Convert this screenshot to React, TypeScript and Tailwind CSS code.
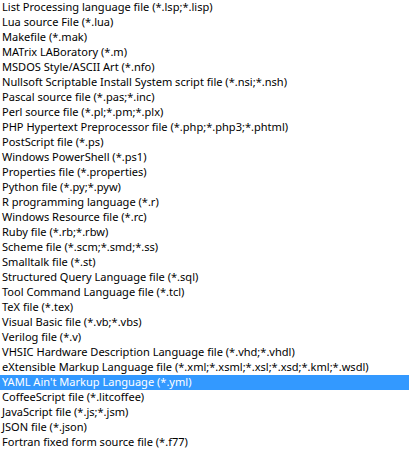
const items = [
  "List Processing language file (*.lsp;*.lisp)",
  "Lua source File (*.lua)",
  "Makefile (*.mak)",
  "MATrix LABoratory (*.m)",
  "MSDOS Style/ASCII Art (*.nfo)",
  "Nullsoft Scriptable Install System script file (*.nsi;*.nsh)",
  "Pascal source file (*.pas;*.inc)",
  "Perl source file (*.pl;*.pm;*.plx)",
  "PHP Hypertext Preprocessor file (*.php;*.php3;*.phtml)",
  "PostScript file (*.ps)",
  "Windows PowerShell (*.ps1)",
  "Properties file (*.properties)",
  "Python file (*.py;*.pyw)",
  "R programming language (*.r)",
  "Windows Resource file (*.rc)",
  "Ruby file (*.rb;*.rbw)",
  "Scheme file (*.scm;*.smd;*.ss)",
  "Smalltalk file (*.st)",
  "Structured Query Language file (*.sql)",
  "Tool Command Language file (*.tcl)",
  "TeX file (*.tex)",
  "Visual Basic file (*.vb;*.vbs)",
  "Verilog file (*.v)",
  "VHSIC Hardware Description Language file (*.vhd;*.vhdl)",
  "eXtensible Markup Language file (*.xml;*.xsml;*.xsl;*.xsd;*.kml;*.wsdl)",
  "YAML Ain't Markup Language (*.yml)",
  "CoffeeScript file (*.litcoffee)",
  "JavaScript file (*.js;*.jsm)",
  "JSON file (*.json)",
  "Fortran fixed form source file (*.f77)",
];

const SELECTED = "YAML Ain't Markup Language (*.yml)";

export default function App() {
  return (
    <div className="h-[450px] w-[409px] overflow-hidden bg-white font-['Noto_Sans',sans-serif] text-[11.05px] text-black">
      <ul>
        {items.map((item) => {
          const selected = item === SELECTED;
          return (
            <li
              key={item}
              className={`h-[15px] overflow-hidden whitespace-nowrap pl-[2px] leading-[14px] ${
                selected ? "bg-[#3399ff] text-white" : ""
              }`}
            >
              {item}
            </li>
          );
        })}
      </ul>
    </div>
  );
}
